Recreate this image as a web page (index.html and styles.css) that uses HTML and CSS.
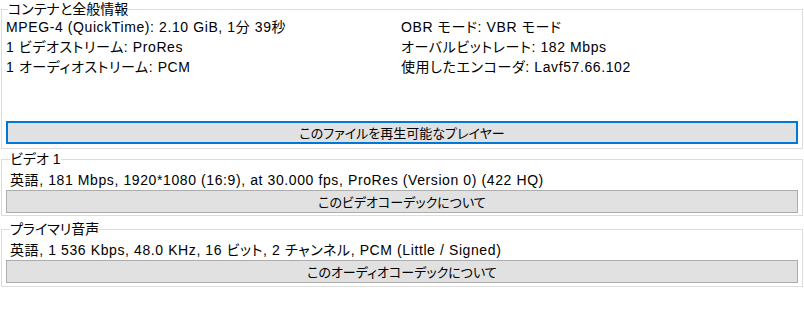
FILE: index.html
```html
<!DOCTYPE html>
<html lang="ja">
<head>
  <meta charset="UTF-8">
  <title>MediaInfo</title>
  <link rel="stylesheet" href="styles.css">
</head>
<body>
  <!-- Conteneur et infos générales -->
  <fieldset class="group general">
    <legend>コンテナと全般情報</legend>
    <div class="columns">
      <div class="col">
        <p>MPEG-4 (QuickTime): 2.10 GiB, 1分 39秒</p>
        <p>1 ビデオストリーム: ProRes</p>
        <p>1 オーディオストリーム: PCM</p>
      </div>
      <div class="col">
        <p>OBR モード: VBR モード</p>
        <p>オーバルビットレート: 182 Mbps</p>
        <p>使用したエンコーダ: Lavf57.66.102</p>
      </div>
    </div>
    <button class="btn default">このファイルを再生可能なプレイヤー</button>
  </fieldset>

  <fieldset class="group video">
    <legend>ビデオ 1</legend>
    <p>英語, 181 Mbps, 1920*1080 (16:9), at 30.000 fps, ProRes (Version 0) (422 HQ)</p>
    <button class="btn">このビデオコーデックについて</button>
  </fieldset>

  <fieldset class="group audio">
    <legend>プライマリ音声</legend>
    <p>英語, 1 536 Kbps, 48.0 KHz, 16 ビット, 2 チャンネル, PCM (Little / Signed)</p>
    <button class="btn">このオーディオコーデックについて</button>
  </fieldset>
</body>
</html>
```

FILE: styles.css
```css
body {
  margin: 0;
  background: #fff;
  color: #000;
  font-family: "Liberation Sans", "Noto Sans CJK JP", sans-serif;
  font-size: 14px;
  letter-spacing: 0.6px;
  font-feature-settings: "palt";
}

p {
  margin: 0;
  line-height: 20px;
  white-space: nowrap;
}

.group {
  margin: 0 1px;
  padding: 0 4px 2px 4px;
  border: 1px solid #dcdcdc;
  min-width: 0;
}

.group legend {
  padding: 0;
  margin-left: 4px;
  line-height: 16px;
  letter-spacing: 0;
}

.general {
  margin-top: 1px;
  padding-bottom: 4px;
}

.general legend {
  margin-left: 2px;
}

.video {
  margin-top: 2px;
}

.audio {
  margin-top: 5px;
  padding-bottom: 3px;
}

.video p,
.audio p {
  margin-top: 3px;
  padding-left: 4px;
}

.columns {
  display: grid;
  grid-template-columns: 395px 1fr;
}

.general .btn {
  margin-top: 44px;
}

.btn {
  display: block;
  width: 100%;
  height: 23px;
  margin: 0;
  padding: 0;
  font-family: inherit;
  font-size: 13px;
  letter-spacing: 0;
  font-feature-settings: "palt";
  color: #000;
  background: #e1e1e1;
  border: 1px solid #adadad;
}

.btn.default {
  border: 2px solid #0078d7;
}
```
